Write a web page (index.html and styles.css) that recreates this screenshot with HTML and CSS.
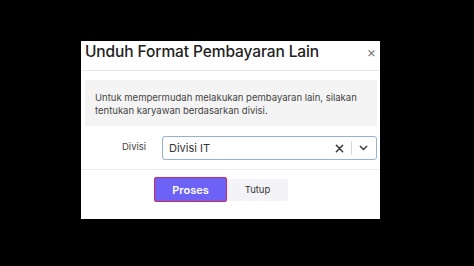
FILE: index.html
```html
<!DOCTYPE html>
<html lang="id">
<head>
  <meta charset="UTF-8" />
  <meta name="viewport" content="width=device-width, initial-scale=1.0" />
  <title>Unduh Format Pembayaran Lain</title>
  <link rel="stylesheet" href="styles.css">
</head>
<body>
  <div class="modal">
    <div class="modal-header">
      <h1>Unduh Format Pembayaran Lain</h1>
      <span class="close">&times;</span>
    </div>

    <div class="modal-body">
      <div class="info">
        Untuk mempermudah melakukan pembayaran lain, silakan
        tentukan karyawan berdasarkan divisi.
      </div>

      <div class="field">
        <label>Divisi</label>
        <div class="select">
          <span class="value">Divisi IT</span>
          <span class="clear">
            <svg width="9" height="9" viewBox="0 0 10 10"><path d="M1.5 1.5l7 7M8.5 1.5l-7 7" stroke="#333" stroke-width="1.6" stroke-linecap="round"/></svg>
          </span>
          <span class="sep"></span>
          <span class="arrow">
            <svg width="9" height="6" viewBox="0 0 10 6"><path d="M1.5 1.2l3.5 3.5 3.5-3.5" fill="none" stroke="#444" stroke-width="1.6" stroke-linecap="round" stroke-linejoin="round"/></svg>
          </span>
        </div>
      </div>
    </div>

    <div class="modal-footer">
      <button class="btn-primary">Proses</button>
      <button class="btn-light">Tutup</button>
    </div>
  </div>
</body>
</html>
```

FILE: styles.css
```css
body {
  margin: 0;
  background: #000;
  font-family: Inter, "Noto Sans", sans-serif;
  width: 474px;
  height: 266px;
  overflow: hidden;
}
.modal {
  margin: 41px 0 0 81px;
  width: 299px;
  height: 178px;
  background: #fff;
  box-sizing: border-box;
}
.modal-header {
  display: flex;
  align-items: flex-start;
  justify-content: space-between;
  height: 30px;
  padding: 1px 4px 0 4px;
  border-bottom: 1px solid #e8e8ec;
  box-sizing: border-box;
}
.modal-header h1 {
  margin: 0;
  font-size: 15.5px;
  line-height: 20px;
  font-weight: 500;
  color: #222;
  letter-spacing: -0.1px;
}
.close {
  font-size: 14px;
  line-height: 20px;
  color: #777;
}
.modal-body {
  padding: 9px 3px 9px 4px;
  border-bottom: 1px solid #ececf0;
}
.info {
  background: #f4f4f5;
  padding: 11px 10px 9px 10px;
  font-size: 9.5px;
  line-height: 13px;
  color: #444;
  height: 26px;
}
.field {
  display: flex;
  align-items: center;
  margin-top: 10px;
}
.field label {
  width: 77px;
  padding-left: 37px;
  box-sizing: border-box;
  font-size: 9.5px;
  color: #444;
  margin-top: -3px;
}
.select {
  flex: 1;
  display: flex;
  align-items: center;
  height: 22px;
  border: 1px solid #94b3d3;
  border-radius: 3px;
  padding: 0 8px 0 6px;
}
.value {
  flex: 1;
  font-size: 11px;
  color: #333;
}
.clear {
  display: flex;
  margin-right: 7px;
}
.sep {
  width: 1px;
  height: 14px;
  background: #d6d6dc;
  margin-right: 7px;
}
.arrow {
  display: flex;
}
.modal-footer {
  display: flex;
  align-items: center;
  padding: 7px 0 0 73px;
}
button {
  font-family: inherit;
  border-radius: 2px;
  cursor: pointer;
}
.btn-primary {
  width: 73px;
  height: 25px;
  background: #6c63f6;
  color: #fff;
  font-size: 11px;
  font-weight: 600;
  border: 1.5px solid #d02a5c;
}
.btn-light {
  width: 61px;
  height: 22px;
  background: #f3f3f8;
  color: #333;
  font-size: 9.5px;
  border: none;
}
```
